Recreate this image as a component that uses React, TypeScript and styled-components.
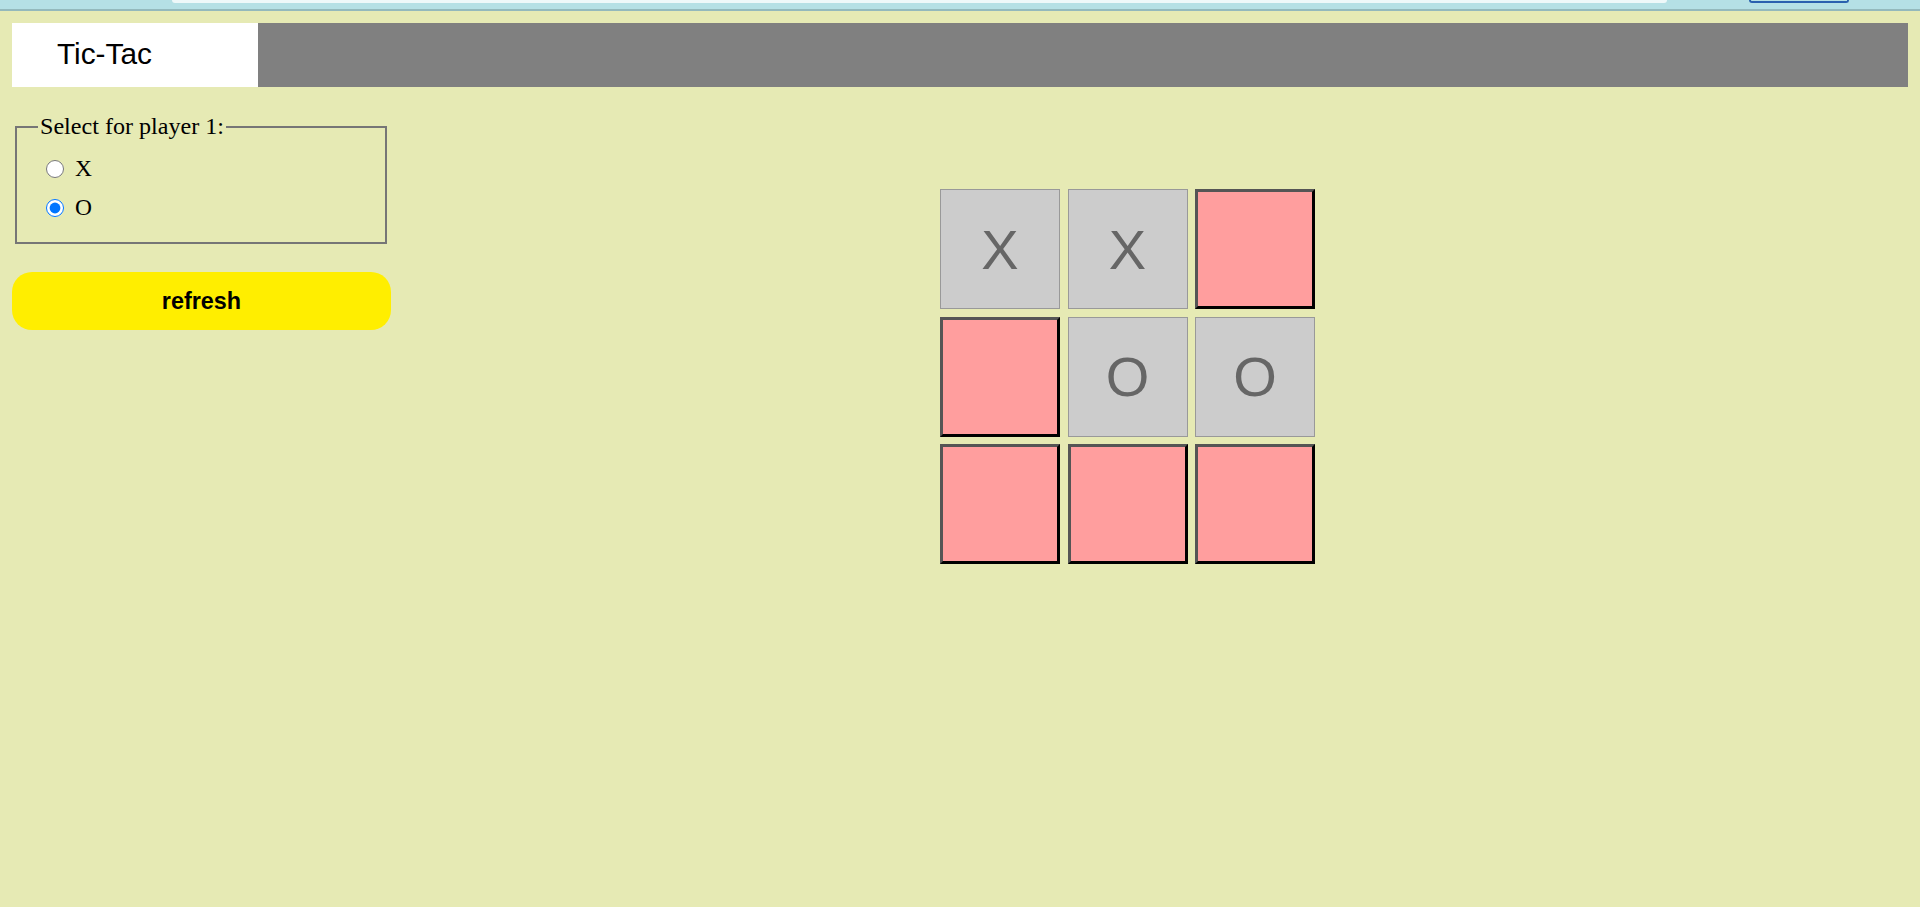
import React, { useState } from 'react';
import styled, { createGlobalStyle } from 'styled-components';

type Mark = 'X' | 'O' | null;

const START: Mark[] = ['X', 'X', null, null, 'O', 'O', null, null, null];

const GlobalStyle = createGlobalStyle`
  html, body {
    margin: 0;
    padding: 0;
    background: #e6eab4;
  }
  * {
    box-sizing: border-box;
  }
`;

export default function App() {
    const [squares, setSquares] = useState<Mark[]>(START);
    const [player, setPlayer] = useState<'X' | 'O'>('O');

    const onSquareClick = (index: number) => {
        if (squares[index]) return;
        const next = [...squares];
        next[index] = player;
        setSquares(next);
    };

    return (
        <>
            <GlobalStyle />
            <BrowserStrip>
                <AddressBar />
                <PillButton />
            </BrowserStrip>
            <Page>
                <Header>
                    <Title>Tic-Tac</Title>
                    <HeaderFill />
                </Header>
                <Content>
                    <Side>
                        <PlayerSet>
                            <Legend>Select for player 1:</Legend>
                            {(['X', 'O'] as const).map((value) => (
                                <RadioRow key={value}>
                                    <Radio
                                        type="radio"
                                        name="player"
                                        checked={player === value}
                                        onChange={() => setPlayer(value)}
                                    />
                                    {value}
                                </RadioRow>
                            ))}
                        </PlayerSet>
                        <RefreshButton onClick={() => setSquares(Array(9).fill(null))}>refresh</RefreshButton>
                    </Side>
                    <Main>
                        <Board>
                            {squares.map((value, i) => (
                                <Square key={i} $played={!!value} onClick={() => onSquareClick(i)}>
                                    {value}
                                </Square>
                            ))}
                        </Board>
                    </Main>
                </Content>
            </Page>
        </>
    );
}

const BrowserStrip = styled.div`
  display: flex;
  align-items: flex-start;
  height: 11px;
  background: #b5e0e5;
  border-bottom: 2px solid #94b9bc;
`;

const AddressBar = styled.div`
  margin-left: 172px;
  width: 1495px;
  height: 3px;
  background: #eef8f9;
  border-radius: 0 0 8px 8px;
`;

const PillButton = styled.div`
  margin-left: 82px;
  width: 100px;
  height: 3px;
  border: 2px solid #2a60ae;
  border-top: none;
  border-radius: 0 0 12px 12px;
`;

const Page = styled.div`
  padding: 12px;
`;

const Header = styled.div`
  display: flex;
  height: 64px;
`;

const Title = styled.div`
  display: flex;
  align-items: center;
  width: 246px;
  padding: 0 0 2px 45px;
  background: #ffffff;
  color: #000;
  font-family: "Liberation Sans", Arial, sans-serif;
  font-size: 29.8px;
`;

const HeaderFill = styled.div`
  flex: 1;
  background: #808080;
`;

const Content = styled.div`
  display: flex;
  align-items: flex-start;
`;

const Side = styled.div`
  width: 379px;
  padding-top: 26px;
`;

const PlayerSet = styled.fieldset`
  margin: 0 4px 0 3px;
  padding: 9px 10px 15px 22px;
  border: 2px solid #767676;
  min-width: 0;
`;

const Legend = styled.legend`
  padding: 0 2px;
  margin-left: -1px;
  font-family: "Liberation Serif", "Times New Roman", serif;
  font-size: 24.1px;
  line-height: 27px;
  color: #000;
`;

const RadioRow = styled.label`
  display: flex;
  align-items: center;
  height: 39px;
  font-family: "Liberation Serif", "Times New Roman", serif;
  font-size: 23.5px;
  color: #000;
  cursor: pointer;
`;

const Radio = styled.input`
  width: 18px;
  height: 18px;
  margin: 0 11px 0 7px;
`;

const RefreshButton = styled.button`
  display: block;
  width: 100%;
  height: 58px;
  margin-top: 28px;
  border: none;
  border-radius: 20px;
  background: #ffee00;
  color: #000;
  font-family: "Liberation Sans", Arial, sans-serif;
  font-size: 23.4px;
  font-weight: bold;
  cursor: pointer;
`;

const Main = styled.div`
  flex: 1;
  padding: 102px 0 0 549px;
`;

const Board = styled.div`
  display: grid;
  grid-template-columns: repeat(3, 120px);
  grid-auto-rows: 120px;
  gap: 7.5px;
`;

const Square = styled.button<{ $played: boolean }>`
  display: flex;
  align-items: center;
  justify-content: center;
  padding: 0;
  margin: 0;
  font-family: "Liberation Sans", Arial, sans-serif;
  font-size: 56px;
  color: #666666;
  cursor: ${(p) => (p.$played ? 'default' : 'pointer')};
  background: ${(p) => (p.$played ? '#cccccc' : '#ff9e9e')};
  border-style: solid;
  border-width: ${(p) => (p.$played ? '1px' : '3px')};
  border-color: ${(p) => (p.$played ? '#999999' : '#555555 #000000 #000000 #555555')};
`;
